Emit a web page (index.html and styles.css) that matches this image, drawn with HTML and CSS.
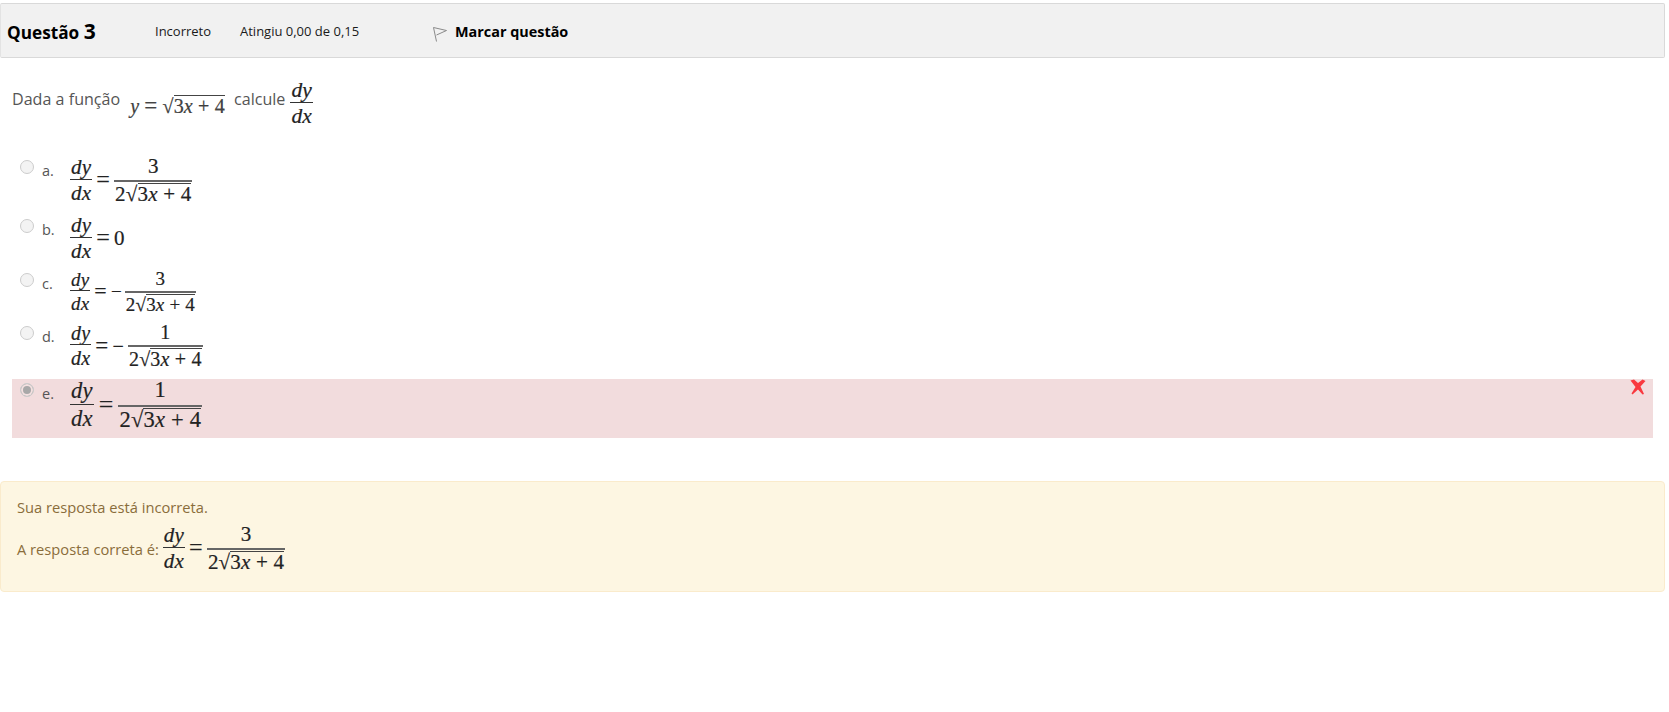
FILE: index.html
```html
<!DOCTYPE html>
<html lang="pt">
<head>
  <meta charset="UTF-8" />
  <title>Questão 3</title>
  <link rel="stylesheet" href="styles.css">
</head>
<body>
  <!-- Question header -->
  <div class="info">
    <h3 class="qno">Questão <span class="num">3</span></h3>
    <div class="state">Incorreto</div>
    <div class="grade">Atingiu 0,00 de 0,15</div>
    <div class="flag">
      <svg width="16" height="18" viewBox="0 0 16 18"><path d="M1.5 2.5 L14.5 5.5 L4.5 10 M1.5 2.5 L4.5 16.5" fill="none" stroke="#8a8a8a" stroke-width="1"/></svg>
      <b>Marcar questão</b>
    </div>
  </div>

  <!-- Question text -->
  <div class="qtext">
    <span class="words">Dada a função</span>
    <span class="eq eq-inline"><i>y</i><span class="op">=</span><span class="sqrt"><span class="rad">√</span><span class="over">3<i>x</i> + 4</span></span></span>
    <span class="words calc">calcule</span>
    <span class="eq eq-q"><span class="frac"><span class="top"><i>dy</i></span><span class="bot"><i>dx</i></span></span></span>
  </div>

  <!-- Options -->
  <div class="answers">
    <div class="opt opt-a">
      <span class="radio"></span><span class="letter">a.</span>
      <span class="eq">
        <span class="frac"><span class="top"><i>dy</i></span><span class="bot"><i>dx</i></span></span>
        <span class="op">=</span>
        <span class="frac wide"><span class="top">3</span><span class="bot">2<span class="sqrt"><span class="rad">√</span><span class="over">3<i>x</i> + 4</span></span></span></span>
      </span>
    </div>
    <div class="opt opt-b">
      <span class="radio"></span><span class="letter">b.</span>
      <span class="eq">
        <span class="frac"><span class="top"><i>dy</i></span><span class="bot"><i>dx</i></span></span>
        <span class="op">=</span><span>0</span>
      </span>
    </div>
    <div class="opt opt-c">
      <span class="radio"></span><span class="letter">c.</span>
      <span class="eq">
        <span class="frac"><span class="top"><i>dy</i></span><span class="bot"><i>dx</i></span></span>
        <span class="op">=</span><span class="minus">−</span>
        <span class="frac wide"><span class="top">3</span><span class="bot">2<span class="sqrt"><span class="rad">√</span><span class="over">3<i>x</i> + 4</span></span></span></span>
      </span>
    </div>
    <div class="opt opt-d">
      <span class="radio"></span><span class="letter">d.</span>
      <span class="eq">
        <span class="frac"><span class="top"><i>dy</i></span><span class="bot"><i>dx</i></span></span>
        <span class="op">=</span><span class="minus">−</span>
        <span class="frac wide"><span class="top">1</span><span class="bot">2<span class="sqrt"><span class="rad">√</span><span class="over">3<i>x</i> + 4</span></span></span></span>
      </span>
    </div>
    <div class="opt opt-e incorrect">
      <span class="radio checked"></span><span class="letter">e.</span>
      <span class="eq">
        <span class="frac"><span class="top"><i>dy</i></span><span class="bot"><i>dx</i></span></span>
        <span class="op">=</span>
        <span class="frac wide"><span class="top">1</span><span class="bot">2<span class="sqrt"><span class="rad">√</span><span class="over">3<i>x</i> + 4</span></span></span></span>
      </span>
      <svg class="cross" width="16" height="16" viewBox="0 0 16 16"><path d="M0.5 1.5 L4 0.5 L8 4 L12.5 0.5 L15.5 2 L10.5 7.5 L14 15 L12.5 15.5 L8 10.5 L2.5 15.5 L1.5 14.5 L5.5 8 Z" fill="#f9393f"/></svg>
    </div>
  </div>

  <!-- Feedback -->
  <div class="feedback">
    <div class="fb-line">Sua resposta está incorreta.</div>
    <div class="fb-answer">
      <span>A resposta correta é:</span>
      <span class="eq">
        <span class="frac"><span class="top"><i>dy</i></span><span class="bot"><i>dx</i></span></span>
        <span class="op">=</span>
        <span class="frac wide"><span class="top">3</span><span class="bot">2<span class="sqrt"><span class="rad">√</span><span class="over">3<i>x</i> + 4</span></span></span></span>
      </span>
    </div>
  </div>
</body>
</html>
```

FILE: styles.css
```css
* { margin: 0; padding: 0; box-sizing: border-box; }

body {
  background: #fff;
  color: #555;
  font-family: "Open Sans", sans-serif;
  font-size: 14px;
  padding: 3px 4px 0 0;
}

/* Question header */
.info {
  height: 55px;
  display: flex;
  align-items: center;
  padding-left: 6px;
  background: #f1f1f1;
  border: 1px solid #d9d9d9;
  border-left-color: #e3e3e3;
  border-radius: 2px;
  color: #1a1a1a;
  font-size: 13px;
}
.qno {
  width: 148px;
  color: #000;
  font-size: 17.2px;
  font-weight: 700;
}
.qno .num { font-size: 21px; font-weight: 700; }
.state { width: 85px; }
.grade { width: 192px; }
.flag {
  display: flex;
  align-items: center;
  gap: 7px;
  color: #000;
  font-size: 14.4px;
  padding-top: 1px;
}
.flag svg { margin-top: 6px; }

/* Math */
.eq {
  display: inline-flex;
  align-items: center;
  color: #222;
  font-family: "Liberation Serif", serif;
  font-size: 21px;
  line-height: 1;
  letter-spacing: 0.2px;
  -webkit-text-stroke: 0.2px #222;
}
.eq i { font-style: italic; }
.frac {
  display: inline-flex;
  flex-direction: column;
  align-items: center;
}
.frac .top { padding: 0 1px 1px; }
.frac .bot {
  padding: 3px 1px 0;
  border-top: 1px solid #333;
  white-space: nowrap;
}
.frac.wide .top { padding-bottom: 3px; }
.frac.wide .bot { border-top-width: 2px; border-top-color: #666; padding: 1px 1px 0; }
.op { margin: 0 4px; font-size: 1.15em; }
.minus { margin-right: 3px; }
.sqrt { display: inline-flex; align-items: flex-end; }
.rad { line-height: 1; }
.over { border-top: 1px solid #444; line-height: 1; white-space: nowrap; }

/* Question text */
.qtext {
  display: flex;
  align-items: center;
  padding: 1px 0 0 12px;
  height: 90px;
  font-size: 16.1px;
  color: #555;
}
.words { margin-bottom: 10px; }
.eq-inline { margin: 4px 0 0 10px; font-size: 20px; color: #444; }
.eq-inline .op { margin: 0 5px; }
.calc { margin-left: 9px; }
.eq-q { margin-left: 5px; font-size: 21.5px; }

/* Options */
.answers { margin-top: 8px; padding-left: 12px; margin-right: 12px; }
.opt {
  display: flex;
  align-items: flex-start;
  padding-left: 8px;
}
.radio {
  flex: none;
  width: 14px;
  height: 14px;
  margin-top: 4px;
  border: 1px solid #ccc;
  border-radius: 50%;
  background: #f3f3f3;
}
.radio.checked {
  background: #a8a8a8;
  box-shadow: inset 0 0 0 2px #f3e0e0;
}
.letter {
  width: 27px;
  margin: 6px 0 0 8px;
  font-size: 14.5px;
  line-height: 18px;
}
.letter + .eq { margin-left: 1px; }
.opt-a { height: 59px; }
.opt-a .eq { font-size: 21px; }
.opt-b { height: 54px; }
.opt-b .eq { font-size: 21px; }
.opt-c { height: 53px; }
.opt-c .eq { font-size: 19px; }
.opt-d { height: 57px; }
.opt-d .eq { font-size: 20px; }
.opt-d .minus { margin-right: 4px; }
.opt-e { height: 59px; position: relative; }
.opt-e .eq { font-size: 22.5px; }
.opt-e .op { margin: 0 5px; }

.incorrect { background: #f2dcdd; }
.cross { position: absolute; top: 0; right: 7px; }

/* Feedback */
.feedback {
  height: 111px;
  margin-top: 43px;
  padding: 15px 16px 0;
  background: #fdf6e2;
  border: 1px solid #faebcc;
  border-radius: 4px;
  color: #8a6d3b;
  font-size: 14.7px;
}
.fb-line { line-height: 20px; }
.fb-answer {
  display: flex;
  align-items: center;
  gap: 4px;
  margin-top: 7px;
}
.fb-answer .eq { font-size: 21px; }
```
